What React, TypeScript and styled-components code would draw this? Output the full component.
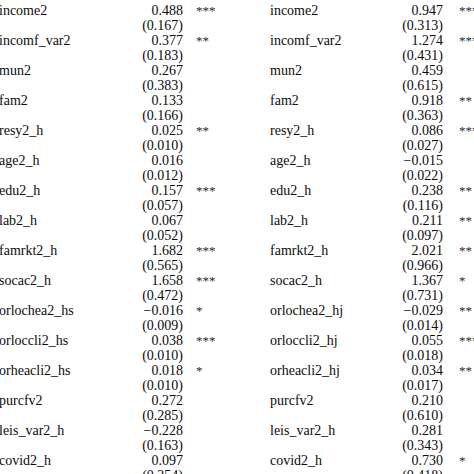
import React from 'react';
import styled, {createGlobalStyle} from "styled-components";

const GlobalStyle = createGlobalStyle`
    html, body {
        margin: 0;
        padding: 0;
        background: #ffffff;
        overflow: hidden;
    }
`;

interface Estimate {
    name: string,
    coef: string,
    se: string,
    stars: string
}

interface VariableRow {
    left: Estimate,
    right: Estimate
}

const rows: VariableRow[] = [
    {left: {name: "income2", coef: "0.488", se: "(0.167)", stars: "***"}, right: {name: "income2", coef: "0.947", se: "(0.313)", stars: "***"}},
    {left: {name: "incomf_var2", coef: "0.377", se: "(0.183)", stars: "**"}, right: {name: "incomf_var2", coef: "1.274", se: "(0.431)", stars: "***"}},
    {left: {name: "mun2", coef: "0.267", se: "(0.383)", stars: ""}, right: {name: "mun2", coef: "0.459", se: "(0.615)", stars: ""}},
    {left: {name: "fam2", coef: "0.133", se: "(0.166)", stars: ""}, right: {name: "fam2", coef: "0.918", se: "(0.363)", stars: "**"}},
    {left: {name: "resy2_h", coef: "0.025", se: "(0.010)", stars: "**"}, right: {name: "resy2_h", coef: "0.086", se: "(0.027)", stars: "***"}},
    {left: {name: "age2_h", coef: "0.016", se: "(0.012)", stars: ""}, right: {name: "age2_h", coef: "\u22120.015", se: "(0.022)", stars: ""}},
    {left: {name: "edu2_h", coef: "0.157", se: "(0.057)", stars: "***"}, right: {name: "edu2_h", coef: "0.238", se: "(0.116)", stars: "**"}},
    {left: {name: "lab2_h", coef: "0.067", se: "(0.052)", stars: ""}, right: {name: "lab2_h", coef: "0.211", se: "(0.097)", stars: "**"}},
    {left: {name: "famrkt2_h", coef: "1.682", se: "(0.565)", stars: "***"}, right: {name: "famrkt2_h", coef: "2.021", se: "(0.966)", stars: "**"}},
    {left: {name: "socac2_h", coef: "1.658", se: "(0.472)", stars: "***"}, right: {name: "socac2_h", coef: "1.367", se: "(0.731)", stars: "*"}},
    {left: {name: "orlochea2_hs", coef: "\u22120.016", se: "(0.009)", stars: "*"}, right: {name: "orlochea2_hj", coef: "\u22120.029", se: "(0.014)", stars: "**"}},
    {left: {name: "orloccli2_hs", coef: "0.038", se: "(0.010)", stars: "***"}, right: {name: "orloccli2_hj", coef: "0.055", se: "(0.018)", stars: "***"}},
    {left: {name: "orheacli2_hs", coef: "0.018", se: "(0.010)", stars: "*"}, right: {name: "orheacli2_hj", coef: "0.034", se: "(0.017)", stars: "**"}},
    {left: {name: "purcfv2", coef: "0.272", se: "(0.285)", stars: ""}, right: {name: "purcfv2", coef: "0.210", se: "(0.610)", stars: ""}},
    {left: {name: "leis_var2_h", coef: "\u22120.228", se: "(0.163)", stars: ""}, right: {name: "leis_var2_h", coef: "0.281", se: "(0.343)", stars: ""}},
    {left: {name: "covid2_h", coef: "0.097", se: "(0.254)", stars: ""}, right: {name: "covid2_h", coef: "0.730", se: "(0.418)", stars: "*"}},
];

const Table = styled.div`
    margin-left: -1px;
    padding-top: 3px;
    font-family: "Liberation Serif", "Times New Roman", serif;
    font-size: 14px;
    line-height: 15px;
    color: #0c0c0c;
`;

const Line = styled.div`
    display: grid;
    grid-template-columns: 131px 53px 87px 120px 53px 31px;
    height: 15px;
    white-space: nowrap;
`;

const Name = styled.div`
    text-align: left;
`;

const Num = styled.div`
    text-align: right;
`;

const Stars = styled.div<{ $pad: number }>`
    padding-left: ${props => props.$pad}px;
    font-size: 13px;
    color: #2a2a2a;
`;

const Pair = (props: { row: VariableRow }) => {
    const {left, right} = props.row;
    return <>
        <Line>
            <Name>{left.name}</Name>
            <Num>{left.coef}</Num>
            <Stars $pad={13}>{left.stars}</Stars>
            <Name>{right.name}</Name>
            <Num>{right.coef}</Num>
            <Stars $pad={16}>{right.stars}</Stars>
        </Line>
        <Line>
            <Name/>
            <Num>{left.se}</Num>
            <Stars $pad={13}/>
            <Name/>
            <Num>{right.se}</Num>
            <Stars $pad={16}/>
        </Line>
    </>;
};

const App = () => {
    return (
        <>
            <GlobalStyle/>
            <Table>
                {rows.map(r => <Pair key={r.left.name} row={r}/>)}
            </Table>
        </>
    );
};

export default App;
